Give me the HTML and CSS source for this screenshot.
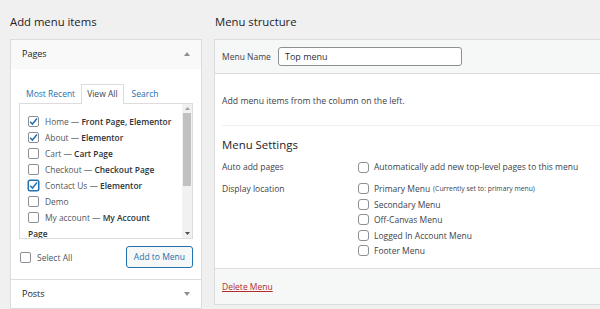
FILE: index.html
```html
<!DOCTYPE html>
<html>
<head>
<meta charset="utf-8">
<link rel="stylesheet" href="styles.css">
</head>
<body>
<div class="wrap">
  <div class="col-left">
    <h2 class="page-title">Add menu items</h2>
    <div class="panel">
      <div class="acc-title">
        <span>Pages</span>
        <svg class="arrow" width="6" height="4" viewBox="0 0 6 4"><path d="M0 4 L3 0 L6 4 Z" fill="#8c8f94"/></svg>
      </div>
      <div class="acc-content">
        <div class="tabs">
          <span class="tab">Most Recent</span>
          <span class="tab active">View All</span>
          <span class="tab">Search</span>
        </div>
        <div class="list-box">
          <ul class="items">
            <li><span class="cb checked"><svg viewBox="0 0 12 12"><path d="M2.3 6.2 L4.9 8.8 L9.8 2.8" fill="none" stroke="#2271b1" stroke-width="1.6"/></svg></span><span class="title">Home</span> — <b>Front Page, Elementor</b></li>
            <li><span class="cb checked"><svg viewBox="0 0 12 12"><path d="M2.3 6.2 L4.9 8.8 L9.8 2.8" fill="none" stroke="#2271b1" stroke-width="1.6"/></svg></span><span class="title">About</span> — <b>Elementor</b></li>
            <li><span class="cb"></span><span class="title">Cart</span> — <b>Cart Page</b></li>
            <li><span class="cb"></span><span class="title">Checkout</span> — <b>Checkout Page</b></li>
            <li><span class="cb checked focus"><svg viewBox="0 0 12 12"><path d="M2.3 6.2 L4.9 8.8 L9.8 2.8" fill="none" stroke="#2271b1" stroke-width="1.6"/></svg></span><span class="title">Contact Us</span> — <b>Elementor</b></li>
            <li><span class="cb"></span><span class="title">Demo</span></li>
            <li><span class="cb"></span><span class="title">My account</span> — <b>My Account<br>Page</b></li>
          </ul>
          <div class="scrollbar">
            <span class="sb-arrow"><svg width="5" height="3" viewBox="0 0 5 3"><path d="M0 3 L2.5 0 L5 3 Z" fill="#a0a0a0"/></svg></span>
            <span class="sb-thumb"></span>
            <span class="sb-space"></span>
            <span class="sb-arrow"><svg width="5" height="3" viewBox="0 0 5 3"><path d="M0 0 L2.5 3 L5 0 Z" fill="#505050"/></svg></span>
          </div>
        </div>
        <div class="actions">
          <label class="select-all"><span class="cb"></span>Select All</label>
          <span class="button">Add to Menu</span>
        </div>
      </div>
      <div class="acc-title closed">
        <span>Posts</span>
        <svg class="arrow" width="6" height="4" viewBox="0 0 6 4"><path d="M0 0 L3 4 L6 0 Z" fill="#8c8f94"/></svg>
      </div>
    </div>
  </div>
  <div class="col-right">
    <h2 class="page-title">Menu structure</h2>
    <div class="panel menu-panel">
      <div class="menu-header">
        <span class="label">Menu Name</span>
        <span class="input">Top menu</span>
      </div>
      <div class="menu-body">
        <p class="hint">Add menu items from the column on the left.</p>
        <div class="settings">
          <h3>Menu Settings</h3>
          <div class="row first">
            <span class="row-label">Auto add pages</span>
            <div class="options">
              <div class="opt"><span class="cb round"></span>Automatically add new top-level pages to this menu</div>
            </div>
          </div>
          <div class="row">
            <span class="row-label">Display location</span>
            <div class="options">
              <div class="opt"><span class="cb round"></span>Primary Menu <small>(Currently set to: primary menu)</small></div>
              <div class="opt"><span class="cb round"></span>Secondary Menu</div>
              <div class="opt"><span class="cb round"></span>Off-Canvas Menu</div>
              <div class="opt"><span class="cb round"></span>Logged In Account Menu</div>
              <div class="opt"><span class="cb round"></span>Footer Menu</div>
            </div>
          </div>
        </div>
      </div>
      <div class="menu-footer">
        <a class="delete">Delete Menu</a>
      </div>
    </div>
  </div>
</div>
</body>
</html>
```

FILE: styles.css
```css
html, body {
  margin: 0;
  padding: 0;
}
body {
  background: #f0f0f1;
  font-family: "Open Sans", "Noto Sans", sans-serif;
  font-size: 8.5px;
  color: #3c434a;
  width: 600px;
  height: 309px;
  overflow: hidden;
}
.wrap {
  display: flex;
  padding-left: 10px;
  gap: 12px;
}
.col-left {
  width: 192px;
  flex: none;
}
.col-right {
  width: 400px;
  flex: none;
}
.page-title {
  margin: 0;
  height: 39px;
  box-sizing: border-box;
  padding-top: 5px;
  line-height: 34px;
  font-size: 11.3px;
  font-weight: 400;
  color: #1d2327;
}
.col-right .page-title {
  padding-left: 1px;
}
.panel {
  background: #fff;
  border: 1px solid #dcdcde;
}
.acc-title {
  height: 29px;
  box-sizing: border-box;
  padding: 0 11px 2px 11px;
  display: flex;
  align-items: center;
  justify-content: space-between;
  font-size: 9px;
  color: #1d2327;
  background: #f9f9f9;
}
.acc-title.closed {
  background: #fff;
  border-top: 1px solid #dcdcde;
  padding-bottom: 1px;
}
.acc-content {
  padding: 15px 8px 0 8px;
}
.tabs {
  display: flex;
  height: 19px;
  align-items: stretch;
}
.tab {
  padding: 0 5px 0 7px;
  line-height: 20px;
  color: #2271b1;
}
.tab.active {
  color: #3c434a;
  border: 1px solid #dcdcde;
  border-bottom: none;
  background: #fff;
  margin: 0 1px;
  padding: 0 5px;
  line-height: 18px;
  position: relative;
  z-index: 1;
  box-sizing: border-box;
  margin-bottom: -1px;
  height: 20px;
}
.list-box {
  border: 1px solid #dcdcde;
  height: 136px;
  box-sizing: border-box;
  display: flex;
  overflow: hidden;
}
.items {
  list-style: none;
  margin: 0;
  padding: 10px 6px 0 8px;
  flex: 1;
  min-width: 0;
  font-size: 8.4px;
}
.items li {
  line-height: 16px;
  color: #50575e;
}
.items b {
  font-weight: 600;
  color: #2c3338;
}
.cb {
  display: inline-block;
  width: 11px;
  height: 11px;
  box-sizing: border-box;
  border: 1px solid #8c8f94;
  border-radius: 2px;
  background: #fff;
  vertical-align: -2px;
  margin-right: 6px;
  position: relative;
}
.cb svg {
  position: absolute;
  left: -1px;
  top: -1px;
  width: 11px;
  height: 11px;
}
.cb.focus {
  border-color: #2271b1;
  box-shadow: 0 0 0 0.5px #2271b1;
}
.scrollbar {
  width: 10px;
  flex: none;
  background: #f1f1f1;
  display: flex;
  flex-direction: column;
  align-items: center;
}
.sb-arrow {
  height: 9px;
  display: flex;
  align-items: center;
  justify-content: center;
}
.sb-thumb {
  width: 8px;
  height: 73px;
  background: #c1c1c1;
}
.sb-space {
  flex: 1;
}
.actions {
  display: flex;
  justify-content: space-between;
  align-items: center;
  padding: 7px 0 11px 1px;
}
.select-all {
  display: flex;
  align-items: center;
  color: #50575e;
}
.button {
  height: 22px;
  box-sizing: border-box;
  border: 1px solid #2271b1;
  border-radius: 3px;
  background: #f6f7f7;
  color: #2271b1;
  padding: 0 7px;
  line-height: 20px;
  font-size: 8.5px;
}
.menu-panel {
  height: 266px;
  box-sizing: border-box;
  border-right: none;
  display: flex;
  flex-direction: column;
}
.menu-header {
  height: 34px;
  box-sizing: border-box;
  background: #f6f7f7;
  border-bottom: 1px solid #dcdcde;
  display: flex;
  align-items: center;
  padding: 0 7px;
}
.menu-header .label {
  width: 56px;
}
.input {
  width: 184px;
  height: 19px;
  box-sizing: border-box;
  border: 1px solid #8c8f94;
  border-radius: 3px;
  background: #fff;
  padding: 0 6px;
  line-height: 17px;
  font-size: 9px;
  color: #2c3338;
}
.menu-body {
  flex: 1;
  padding: 0 0 0 7px;
}
.hint {
  margin: 0;
  padding: 20px 0 17px;
  line-height: 14px;
  font-size: 8.7px;
  border-bottom: 1px solid #f0f0f1;
}
.settings h3 {
  margin: 11px 0 0;
  line-height: 16px;
  font-size: 11.4px;
  font-weight: 500;
  color: #1d2327;
}
.row {
  display: flex;
  margin-top: 6px;
}
.row.first .opt {
  line-height: 16px;
}
.row-label {
  width: 136px;
  flex: none;
  line-height: 16px;
}
.opt {
  line-height: 15.5px;
  display: flex;
  align-items: center;
}
.cb.round {
  border-radius: 3px;
  margin-right: 5px;
}
.opt small {
  font-size: 6.8px;
  margin-left: 3px;
}
.menu-footer {
  height: 36px;
  box-sizing: border-box;
  background: #f6f7f7;
  border-top: 1px solid #dcdcde;
  display: flex;
  align-items: center;
  padding: 0 7px;
}
.delete {
  color: #b32d2e;
  text-decoration: underline;
}
```
